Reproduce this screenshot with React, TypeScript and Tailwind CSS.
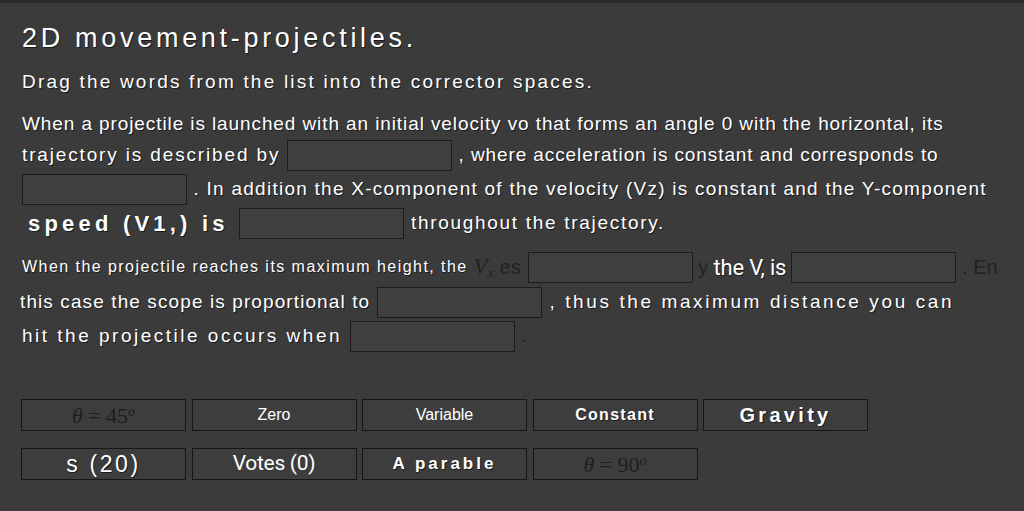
import React from 'react';

const sans = "font-['Liberation_Sans',Arial,sans-serif]";
const shadow = '[text-shadow:1px_1px_0_#1c1c1c]';

function Blank() {
  return <span className="inline-block w-[165px] h-[31px] border border-[#1c1c1c] bg-[#3f3f3f] shrink-0" />;
}

function Line({ children, className = '' }: { children: React.ReactNode; className?: string }) {
  return <div className={`flex items-center h-[34px] whitespace-pre ${className}`}>{children}</div>;
}

function Theta({ deg }: { deg: string }) {
  return (
    <span className="font-['Liberation_Serif',serif] text-[22px] text-[#1e1e1e]">
      <i>θ</i> = {deg}
      <sup className="text-[14px] italic">o</sup>
    </span>
  );
}

function Chip({ children }: { children: React.ReactNode }) {
  return (
    <div className="w-[165px] h-[32px] border border-[#161616] bg-[#3d3d3d] flex items-center justify-center text-white">
      {children}
    </div>
  );
}

export default function App() {
  return (
    <div className={`w-[1024px] h-[511px] bg-[#3b3b3b] border-t-[3px] border-[#2b2b2b] text-white ${sans} overflow-hidden`}>
      <div className="pl-[22px]">
        <h1 className={`pt-[20px] text-[27px] tracking-[3.7px] leading-[30px] ${shadow}`}>2D movement-projectiles.</h1>
        <p className={`mt-[18px] text-[19px] tracking-[2.2px] leading-[22px] ${shadow}`}>
          Drag the words from the list into the corrector spaces.
        </p>

        <div className={`mt-[11px] text-[19px] tracking-[0.9px] ${shadow}`}>
          <Line className="pt-[6px]">
            When a projectile is launched with an initial velocity vo that forms an angle 0 with the horizontal, its
          </Line>
          <Line>
            <span className="tracking-[1.85px]">trajectory is described by </span>
            <Blank />
            <span className="tracking-[0.9px]"> , where acceleration is constant and corresponds to</span>
          </Line>
          <Line>
            <Blank />
            <span className="tracking-[1.25px]"> . In addition the X-component of the velocity (Vz) is constant and the Y-component</span>
          </Line>
          <Line>
            <span className="pl-[6px] text-[22px] tracking-[4.2px] font-bold">speed (V1,) is </span>
            <Blank />
            <span className="ml-[7px] tracking-[1.7px]">throughout the trajectory.</span>
          </Line>

          <div className="mt-[10px]">
            <Line className="text-[16px]">
              <span className="tracking-[1.45px]">When the projectile reaches its maximum height, the </span>
              <span className="font-['Liberation_Serif',serif] italic text-[23px] text-[#222] tracking-normal [text-shadow:none]">
                V<sub className="text-[13px]">x</sub>
              </span>
              <span className="text-[20px] text-[#222] tracking-[0.5px] [text-shadow:none]"> es </span>
              <Blank />
              <span className="text-[20px] text-[#222] tracking-normal [text-shadow:none]"> y</span>
              <span className="font-['Roboto',sans-serif] text-[22px] tracking-[-0.2px]"> the V, is </span>
              <Blank />
              <span className="text-[20px] text-[#222] tracking-normal [text-shadow:none]"> . En</span>
            </Line>
            <Line className="-ml-[2px] mt-[1px]">
              <span className="tracking-[1.1px]">this case the scope is proportional to </span>
              <Blank />
              <span className="tracking-[2.6px]"> , thus the maximum distance you can</span>
            </Line>
            <Line>
              <span className="tracking-[2.5px]">hit the projectile occurs when </span>
              <Blank />
              <span className="text-[#222] [text-shadow:none]"> .</span>
            </Line>
          </div>
        </div>

        <div className="mt-[46px] flex flex-col gap-[17px] -ml-[1px]">
          <div className="flex gap-[5.5px]">
            <Chip><Theta deg="45" /></Chip>
            <Chip><span className="text-[16px]">Zero</span></Chip>
            <Chip><span className="text-[16px]">Variable</span></Chip>
            <Chip><span className={`text-[16px] font-bold tracking-[1.3px] ${shadow}`}>Constant</span></Chip>
            <Chip><span className={`text-[20px] font-bold tracking-[3.3px] ${shadow}`}>Gravity</span></Chip>
          </div>
          <div className="flex gap-[5.5px]">
            <Chip><span className={`text-[23px] tracking-[2.6px] ${shadow}`}>s (20)</span></Chip>
            <Chip><span className="font-['Roboto',sans-serif] text-[21px] tracking-[-0.3px]">Votes (0)</span></Chip>
            <Chip><span className={`text-[17px] font-bold tracking-[3px] ${shadow}`}>A parable</span></Chip>
            <Chip><Theta deg="90" /></Chip>
          </div>
        </div>
      </div>
    </div>
  );
}
